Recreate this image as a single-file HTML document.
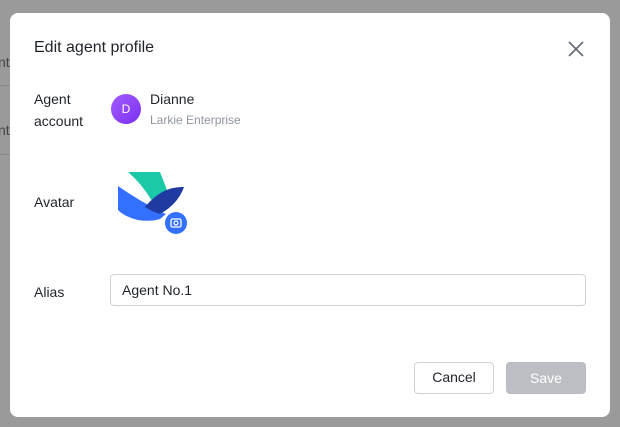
<!DOCTYPE html>
<html><head><style>
body{margin:0;width:620px;height:427px;overflow:hidden;background:#9a9a9a;font-family:"Liberation Sans",Arial,sans-serif;position:relative}
.bgline{position:absolute;left:0;width:10px;height:1px;background:#888}
.dlg{position:absolute;left:10px;top:13px;width:600px;height:404px;background:#fff;border-radius:8px}
.t{position:absolute;color:#1f2329}
.btn{position:absolute;height:30px;border-radius:4px;font-size:14px;text-align:center;line-height:30px;box-sizing:border-box}
</style></head><body>
<div class="bgline" style="top:85px"></div>
<div class="bgline" style="top:154px"></div>
<div class="t" style="left:-2px;top:54px;font-size:14px;color:#444">nt</div>
<div class="t" style="left:-2px;top:122px;font-size:14px;color:#444">nt</div>
<div class="dlg">
<div class="t" style="left:24px;top:26px;font-size:16px">Edit agent profile</div>
<svg style="position:absolute;left:558px;top:28px" width="16" height="16" viewBox="0 0 16 16"><path d="M1 1L15 15M15 1L1 15" stroke="#646a73" stroke-width="1.6"/></svg>
<div class="t" style="left:24px;top:75px;font-size:14px;line-height:22px">Agent<br>account</div>
<div style="position:absolute;left:101px;top:81px;width:30px;height:30px;border-radius:50%;background:linear-gradient(135deg,#a35cff,#7b2ff0);color:#fff;font-size:12px;text-align:center;line-height:30px">D</div>
<div class="t" style="left:140px;top:78px;font-size:14px">Dianne</div>
<div class="t" style="left:140px;top:100px;font-size:12px;color:#8f959e">Larkie Enterprise</div>
<div class="t" style="left:24px;top:181px;font-size:14px">Avatar</div>
<svg style="position:absolute;left:96px;top:143px" width="90" height="90" viewBox="106 156 90 90">
<path d="M128 172 L160 172 L167 190 L152 201 Q142 184 128 172Z" fill="#1bc8a8"/>
<path d="M118 186 Q135 198 152 207 Q160 212 166 214 L160 219 Q150 222 138 220 Q125 217 118 210Z" fill="#3370ff"/>
<path d="M145 207 Q162 186 184 187 Q178 204 160 214 Q151 211 145 207Z" fill="#1f3aa0"/>
<circle cx="176" cy="223" r="11" fill="#3370ff"/>
<rect x="171" y="219" width="10" height="8" rx="1.5" fill="none" stroke="#fff" stroke-width="1.3"/>
<circle cx="176" cy="223" r="2" fill="none" stroke="#fff" stroke-width="1.2"/>
</svg>
<div class="t" style="left:24px;top:271px;font-size:14px">Alias</div>
<div style="position:absolute;left:100px;top:261px;width:476px;height:32px;border:1px solid #d0d3d6;border-radius:4px;box-sizing:border-box;font-size:14px;line-height:30px;padding-left:11px;color:#1f2329">Agent No.1</div>
<div class="btn" style="left:404px;top:349px;width:80px;border:1px solid #d0d3d6;color:#1f2329;line-height:28px;height:32px">Cancel</div>
<div class="btn" style="left:496px;top:349px;width:80px;height:32px;line-height:32px;background:#bbbfc4;color:#fff">Save</div>
</div>
</body></html>
